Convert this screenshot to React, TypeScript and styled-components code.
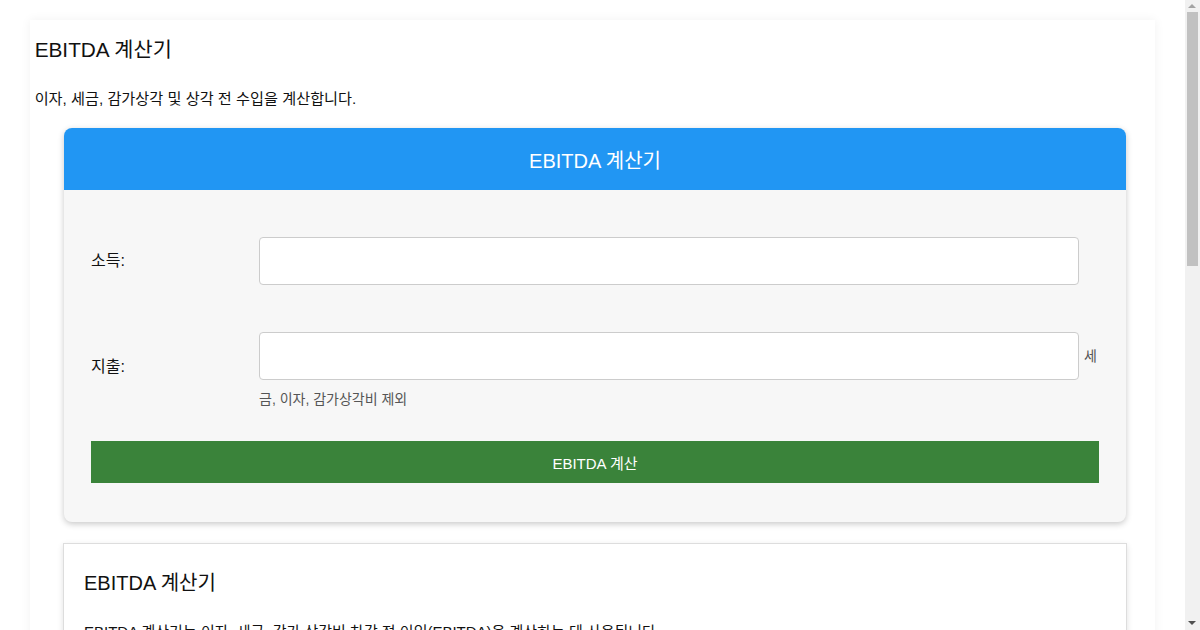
import React from 'react';
import styled, { createGlobalStyle } from 'styled-components';

const GlobalStyle = createGlobalStyle`
  body {
    margin: 0;
    background: #fff;
    color: #111;
    font-family: "Liberation Sans", Arial, "Noto Sans CJK KR", sans-serif;
  }
  * {
    box-sizing: border-box;
  }
`;

// leaves room for the browser scrollbar drawn on the right
const Layout = styled.div`
  padding-right: 15px;
`;

const ScrollRail = styled.div`
  position: fixed;
  top: 0;
  right: 0;
  width: 15px;
  height: 100vh;
  background: #f1f1f1;
`;

const ScrollThumb = styled.div`
  position: absolute;
  top: 12px;
  left: 2px;
  width: 11px;
  height: 254px;
  background: #c1c1c1;
`;

const ScrollArrow = styled.div<{ $down?: boolean }>`
  position: absolute;
  left: 3px;
  width: 0;
  height: 0;
  border-left: 4.5px solid transparent;
  border-right: 4.5px solid transparent;
  ${(p) =>
    p.$down
      ? 'bottom: 5px; border-top: 4px solid #505050;'
      : 'top: 4px; border-bottom: 4px solid #a3a3a3;'}
`;

const Page = styled.div`
  width: 95%;
  margin: 20px auto 0;
  padding: 0 0 40px 5px;
  background: #fff;
  box-shadow: 0 0 10px rgba(0, 0, 0, 0.06);
`;

const PageTitle = styled.h1`
  margin: 0;
  padding-top: 16px;
  font-size: 20.8px;
  font-weight: 400;
  line-height: 28px;
`;

const Intro = styled.p`
  margin: 24px 0 18px;
  font-size: 15.2px;
  line-height: 22px;
`;

const Calculator = styled.div`
  max-width: 1062px;
  margin: 0 auto;
  border-radius: 8px;
  overflow: hidden;
  background: #f7f7f7;
  box-shadow: 0 2px 6px rgba(0, 0, 0, 0.22);
`;

const CalcHeader = styled.div`
  height: 62px;
  display: flex;
  align-items: center;
  justify-content: center;
  background: #2196f3;
  color: #fff;
  font-size: 20px;
`;

const CalcBody = styled.div`
  padding: 47px 27px 39px;
`;

const Form = styled.div`
  display: grid;
  grid-template-columns: 168px 840px;
  row-gap: 47px;
  align-items: center;
`;

const Label = styled.label<{ $lift?: number }>`
  padding-bottom: ${(p) => p.$lift ?? 4}px;
  font-size: 16px;
  color: #111;
`;

const Field = styled.div`
  font-size: 14px;
  line-height: 18px;
  color: #555;
`;

const Input = styled.input<{ $hasNote?: boolean }>`
  display: inline-block;
  vertical-align: baseline;
  width: 820px;
  height: 48px;
  margin: 0 5px ${(p) => (p.$hasNote ? '10px' : '0')} 0;
  padding: 0 10px;
  border: 1px solid #ccc;
  border-radius: 4px;
  background: #fff;
  font-size: 16px;
`;

const SubmitButton = styled.button`
  display: block;
  width: 100%;
  height: 42px;
  margin-top: 33px;
  border: none;
  background: #3a833a;
  color: #fff;
  font-family: inherit;
  font-size: 15px;
  cursor: pointer;
`;

const InfoCard = styled.section`
  max-width: 1064px;
  margin: 21px auto 0;
  padding: 24px 20px;
  border: 1px solid #ddd;
  background: #fff;
  box-shadow: 0 2px 6px rgba(0, 0, 0, 0.12);
`;

const InfoTitle = styled.h2`
  margin: 0;
  font-size: 20px;
  font-weight: 400;
  line-height: 30px;
`;

const InfoText = styled.p`
  margin: 21px 0 0;
  font-size: 15px;
  line-height: 26px;
`;

const paragraphs = [
  'EBITDA 계산기는 이자, 세금, 감가 상각비 차감 전 이익(EBITDA)을 계산하는 데 사용됩니다.',
  'EBITDA는 기업의 영업 성과를 측정하는 지표로, 자금 조달 구조나 회계 처리 방식의 영향을 받지 않고 핵심 사업의 수익성을 비교할 수 있게 해 줍니다.',
  '계산 방법: EBITDA = 소득 - 지출 (세금, 이자, 감가상각비 제외).',
  '소득 항목에는 해당 기간 동안의 총 매출을 입력하고, 지출 항목에는 세금, 이자, 감가상각비를 제외한 모든 영업 비용을 입력하십시오.',
  'EBITDA 값이 높을수록 기업의 영업 활동에서 창출되는 현금 흐름이 크다는 것을 의미합니다. 다만 EBITDA는 자본 지출이나 운전 자본의 변화를 반영하지 않으므로 다른 재무 지표와 함께 검토하는 것이 좋습니다.',
  '이 계산기는 참고용으로만 제공되며, 정확한 재무 분석을 위해서는 전문가와 상담하시기 바랍니다.',
];

const App: React.FC = () => {
  return (
    <>
      <GlobalStyle />
      <Layout>
        <Page>
          <PageTitle>EBITDA 계산기</PageTitle>
          <Intro>이자, 세금, 감가상각 및 상각 전 수입을 계산합니다.</Intro>

          <Calculator>
            <CalcHeader>EBITDA 계산기</CalcHeader>
            <CalcBody>
              <Form>
                <Label htmlFor="income">소득:</Label>
                <Field>
                  <Input id="income" type="text" />
                </Field>
                <Label htmlFor="expenses" $lift={10}>
                  지출:
                </Label>
                <Field>
                  <Input id="expenses" type="text" $hasNote />
                  세금, 이자, 감가상각비 제외
                </Field>
              </Form>
              <SubmitButton type="button">EBITDA 계산</SubmitButton>
            </CalcBody>
          </Calculator>

          <InfoCard>
            <InfoTitle>EBITDA 계산기</InfoTitle>
            {paragraphs.map((text, index) => (
              <InfoText key={index}>{text}</InfoText>
            ))}
          </InfoCard>
        </Page>
      </Layout>
      <ScrollRail>
        <ScrollArrow />
        <ScrollThumb />
        <ScrollArrow $down />
      </ScrollRail>
    </>
  );
};

export default App;
